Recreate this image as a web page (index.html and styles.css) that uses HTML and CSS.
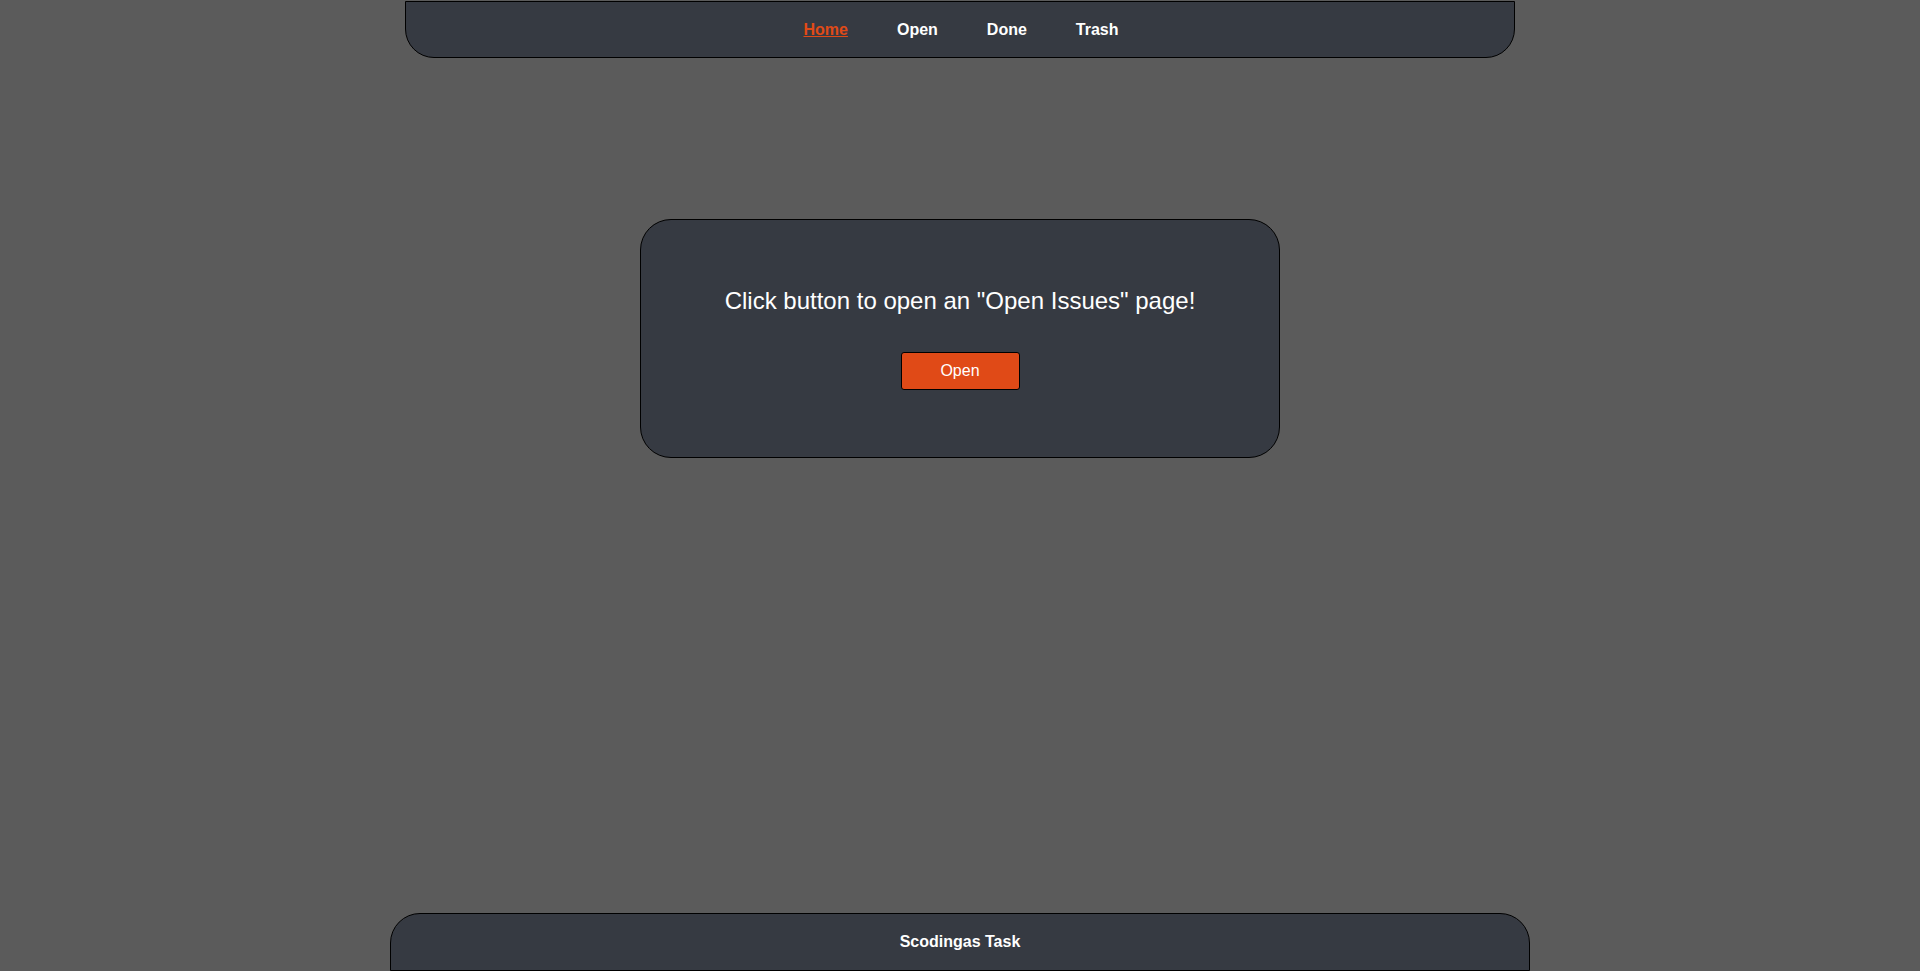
FILE: index.html
```
<!DOCTYPE html>
<html lang="en">
<head>
<meta charset="utf-8">
<title>Scodingas Task</title>
<link rel="stylesheet" href="styles.css">
</head>
<body>
<div class="page">
  <header class="topbar">
    <nav class="nav">
      <a class="nav-link active" href="#">Home</a>
      <a class="nav-link" href="#">Open</a>
      <a class="nav-link" href="#">Done</a>
      <a class="nav-link" href="#">Trash</a>
    </nav>
  </header>
  <main class="main">
    <section class="card">
      <p class="card-text">Click button to open an "Open Issues" page!</p>
      <button class="btn" type="button">Open</button>
    </section>
  </main>
  <footer class="footer">
    <span class="footer-text">Scodingas Task</span>
  </footer>
</div>
</body>
</html>
```
FILE: styles.css
```
html, body {
  margin: 0;
  padding: 0;
  height: 100%;
}
body {
  background: #5b5b5b;
  font-family: "Liberation Sans", Arial, sans-serif;
  color: #fff;
}
.page {
  height: 100vh;
  overflow: hidden;
  display: flex;
  flex-direction: column;
}
.topbar {
  box-sizing: border-box;
  width: 1110px;
  height: 57px;
  margin: 1px auto 0;
  background: #363a42;
  border: 1px solid #000;
  border-radius: 0 0 29px 29px;
  display: flex;
  align-items: center;
  justify-content: center;
}
.nav {
  display: flex;
  gap: 49px;
  padding-left: 2px;
}
.nav-link {
  color: #fff;
  font-weight: bold;
  font-size: 16px;
  text-decoration: none;
}
.nav-link.active {
  color: #e04a17;
  text-decoration: underline;
}
.main {
  display: flex;
  justify-content: center;
  padding-top: 161px;
}
.card {
  box-sizing: border-box;
  width: 640px;
  height: 239px;
  background: #363a42;
  border: 1px solid #000;
  border-radius: 31px;
  padding-top: 67px;
  display: flex;
  flex-direction: column;
  align-items: center;
}
.card-text {
  margin: 0 0 37px;
  font-size: 24px;
  line-height: 28px;
}
.btn {
  box-sizing: border-box;
  width: 119px;
  height: 38px;
  background: #e04a17;
  color: #fff;
  border: 1px solid #000;
  border-radius: 3px;
  font-family: "Liberation Sans", Arial, sans-serif;
  font-size: 16px;
  padding: 0;
}
.footer {
  box-sizing: border-box;
  width: 1140px;
  height: 58px;
  margin: auto auto 0;
  flex-shrink: 0;
  background: #363a42;
  border: 1px solid #000;
  border-radius: 30px 30px 0 0;
  display: flex;
  justify-content: center;
  padding-top: 18px;
}
.footer-text {
  font-family: "Liberation Sans", Arial, sans-serif;
  font-weight: bold;
  font-size: 16px;
  line-height: 19px;
}
```
